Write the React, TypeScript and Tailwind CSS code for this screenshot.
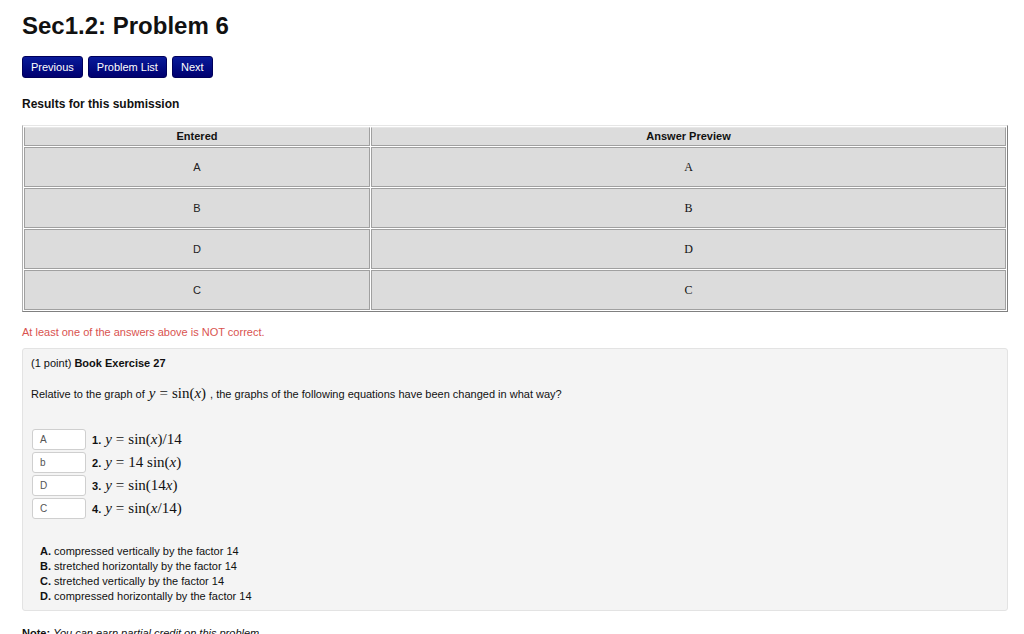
import React from "react";

const sans = { fontFamily: '"Liberation Sans", Arial, sans-serif' };

function V({ children }: { children: React.ReactNode }) {
  return <i className="italic">{children}</i>;
}

function Eq() {
  return <span className="mx-[4px]">=</span>;
}

function M({ children }: { children: React.ReactNode }) {
  return (
    <span className="text-[15px] text-[#111]" style={{ fontFamily: '"Liberation Serif", "DejaVu Serif", serif' }}>
      {children}
    </span>
  );
}

const rows = ["A", "B", "D", "C"];
const answers = ["A", "b", "D", "C"];

export default function App() {
  return (
    <div className="bg-white h-[634px] w-[1024px] overflow-hidden text-[#222]" style={sans}>
      <div className="pl-[22px] pr-[16px] pt-[11px]">
        <h1 className="text-[24px] font-bold leading-[29px] text-[#111]">Sec1.2: Problem 6</h1>
        <div className="flex gap-[5px] mt-[16px]">
          {["Previous", "Problem List", "Next"].map((t) => (
            <button
              key={t}
              className="h-[22px] px-[8px] text-[11px] text-white rounded-[3px] border border-[#00005a] bg-gradient-to-b from-[#0a1a9a] to-[#00006f]"
            >
              {t}
            </button>
          ))}
        </div>
        <div className="text-[12px] font-bold mt-[17px] text-[#111]">Results for this submission</div>

        <div className="mt-[12px] border border-t-[#e6e6e6] border-l-[#b0b0b0] border-r-[#808080] border-b-[#808080] bg-white p-[1px]">
          <div className="grid grid-cols-[346px_1fr] gap-[1px] bg-white">
            <div className="h-[19px] bg-[#dcdcdc] border border-[#a0a0a0] border-t-[#e6e6e6] flex items-center justify-center text-[11px] font-bold text-[#111]">
              Entered
            </div>
            <div className="h-[19px] bg-[#dcdcdc] border border-[#a0a0a0] border-t-[#e6e6e6] flex items-center justify-center text-[11px] font-bold text-[#111]">
              Answer Preview
            </div>
            {rows.map((r) => (
              <React.Fragment key={r}>
                <div className="h-[40px] bg-[#dcdcdc] border border-[#a0a0a0] flex items-center justify-center text-[11px] text-[#222]">
                  {r}
                </div>
                <div
                  className="h-[40px] bg-[#dcdcdc] border border-[#a0a0a0] flex items-center justify-center text-[12px] text-[#111]"
                  style={{ fontFamily: '"Liberation Serif", serif' }}
                >
                  {r}
                </div>
              </React.Fragment>
            ))}
          </div>
        </div>

        <div className="text-[11px] text-[#d9534f] mt-[12px]">At least one of the answers above is NOT correct.</div>

        <div className="mt-[7px] bg-[#f4f4f4] border border-[#e3e3e3] rounded-[3px] pl-[8px] pt-[6px] pb-[8px] h-[263px]">
          <div className="text-[11px] text-[#111]">
            (1 point) <b>Book Exercise 27</b>
          </div>
          <div className="text-[11px] text-[#111] mt-[11px] flex items-baseline gap-[4px]">
            <span>Relative to the graph of</span>
            <M>
              <V>y</V>
              <Eq />
              sin(<V>x</V>)
            </M>
            <span>, the graphs of the following equations have been changed in what way?</span>
          </div>

          <div className="mt-[24px] flex flex-col gap-[1px]">
            {[
              <>
                <V>y</V>
                <Eq />
                sin(<V>x</V>)/14
              </>,
              <>
                <V>y</V>
                <Eq />
                14 sin(<V>x</V>)
              </>,
              <>
                <V>y</V>
                <Eq />
                sin(14<V>x</V>)
              </>,
              <>
                <V>y</V>
                <Eq />
                sin(<V>x</V>/14)
              </>,
            ].map((eq, i) => (
              <div key={i} className="flex items-center gap-[6px] h-[22px]">
                <div className="ml-[1px] w-[54px] h-[21px] bg-white border border-[#cfcfcf] rounded-[3px] text-[10px] text-[#555] pl-[7px] flex items-center">
                  {answers[i]}
                </div>
                <div className="text-[11px] text-[#111] flex items-baseline gap-[4px]">
                  <b>{i + 1}.</b>
                  <M>{eq}</M>
                </div>
              </div>
            ))}
          </div>

          <div className="mt-[24px] pl-[9px] text-[11px] text-[#111] leading-[15px]">
            <div>
              <b>A.</b> compressed vertically by the factor 14
            </div>
            <div>
              <b>B.</b> stretched horizontally by the factor 14
            </div>
            <div>
              <b>C.</b> stretched vertically by the factor 14
            </div>
            <div>
              <b>D.</b> compressed horizontally by the factor 14
            </div>
          </div>
        </div>

        <div className="mt-[14px] text-[11px] text-[#111]">
          <b>Note:</b> <i>You can earn partial credit on this problem.</i>
        </div>
      </div>
    </div>
  );
}
